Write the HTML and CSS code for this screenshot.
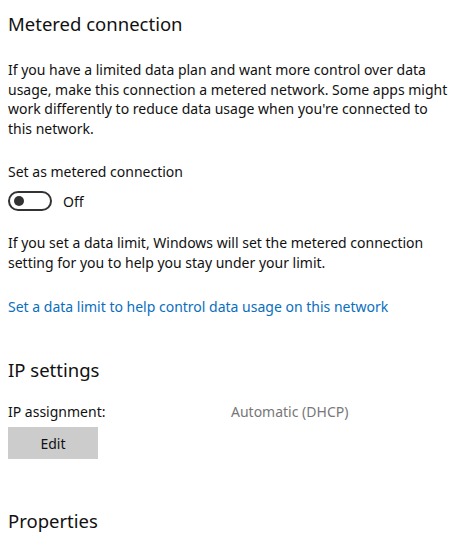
FILE: index.html
```html
<!DOCTYPE html>
<html lang="en">
<head>
<meta charset="utf-8">
<link rel="stylesheet" href="styles.css">
</head>
<body>
<main class="page">
  <section class="section">
    <h2 class="heading">Metered connection</h2>
    <p class="text">If you have a limited data plan and want more control over data usage, make this connection a metered network. Some apps might work differently to reduce data usage when you're connected to this network.</p>
    <div class="field-label">Set as metered connection</div>
    <div class="toggle-row">
      <span class="toggle"><span class="knob"></span></span>
      <span class="toggle-text">Off</span>
    </div>
    <p class="text text-limit">If you set a data limit, Windows will set the metered connection setting for you to help you stay under your limit.</p>
    <a class="link" href="#">Set a data limit to help control data usage on this network</a>
  </section>
  <section class="section section-ip">
    <h2 class="heading">IP settings</h2>
    <div class="kv">
      <span class="kv-key">IP assignment:</span>
      <span class="kv-val">Automatic (DHCP)</span>
    </div>
    <button class="btn">Edit</button>
  </section>
  <section class="section section-props">
    <h2 class="heading">Properties</h2>
  </section>
</main>
</body>
</html>
```
FILE: styles.css
```css
html, body {
  margin: 0;
  padding: 0;
  background: #ffffff;
}
body {
  font-family: "Noto Sans", "Open Sans", sans-serif;
  color: #000000;
  font-size: 14px;
}
.page {
  padding: 8px 8px 0 8px;
  display: flex;
  flex-direction: column;
}
.section {
  display: flex;
  flex-direction: column;
  align-items: flex-start;
}
.heading {
  margin: 0;
  font-weight: 400;
  font-size: 18.5px;
  line-height: 32px;
  color: #111;
}
.text {
  margin: 20px 0 0 0;
  font-size: 14px;
  line-height: 19.5px;
  color: #111;
  max-width: 440px;
}
.field-label {
  margin-top: 24px;
  font-size: 14px;
  line-height: 20px;
  color: #111;
}
.toggle-row {
  display: flex;
  align-items: center;
  gap: 11px;
  margin-top: 9px;
}
.toggle {
  box-sizing: border-box;
  width: 44px;
  height: 20px;
  border: 2px solid #333;
  border-radius: 10px;
  display: flex;
  align-items: center;
  padding-left: 4px;
}
.knob {
  width: 10px;
  height: 10px;
  border-radius: 50%;
  background: #333;
}
.toggle-text {
  font-size: 14px;
  color: #111;
}
.text-limit {
  margin-top: 22px;
}
.link {
  margin-top: 25px;
  font-size: 14px;
  line-height: 20px;
  color: #0a6ebd;
  text-decoration: none;
}
.section-ip {
  margin-top: 37px;
}
.kv {
  display: flex;
  margin-top: 16px;
  line-height: 20px;
}
.kv-key {
  width: 223px;
  color: #111;
}
.kv-val {
  color: #777;
}
.btn {
  margin-top: 5px;
  width: 90px;
  height: 32px;
  border: 0;
  background: #cccccc;
  font-family: inherit;
  font-size: 14px;
  color: #111;
  padding: 0;
}
.section-props {
  margin-top: 46px;
}
```
